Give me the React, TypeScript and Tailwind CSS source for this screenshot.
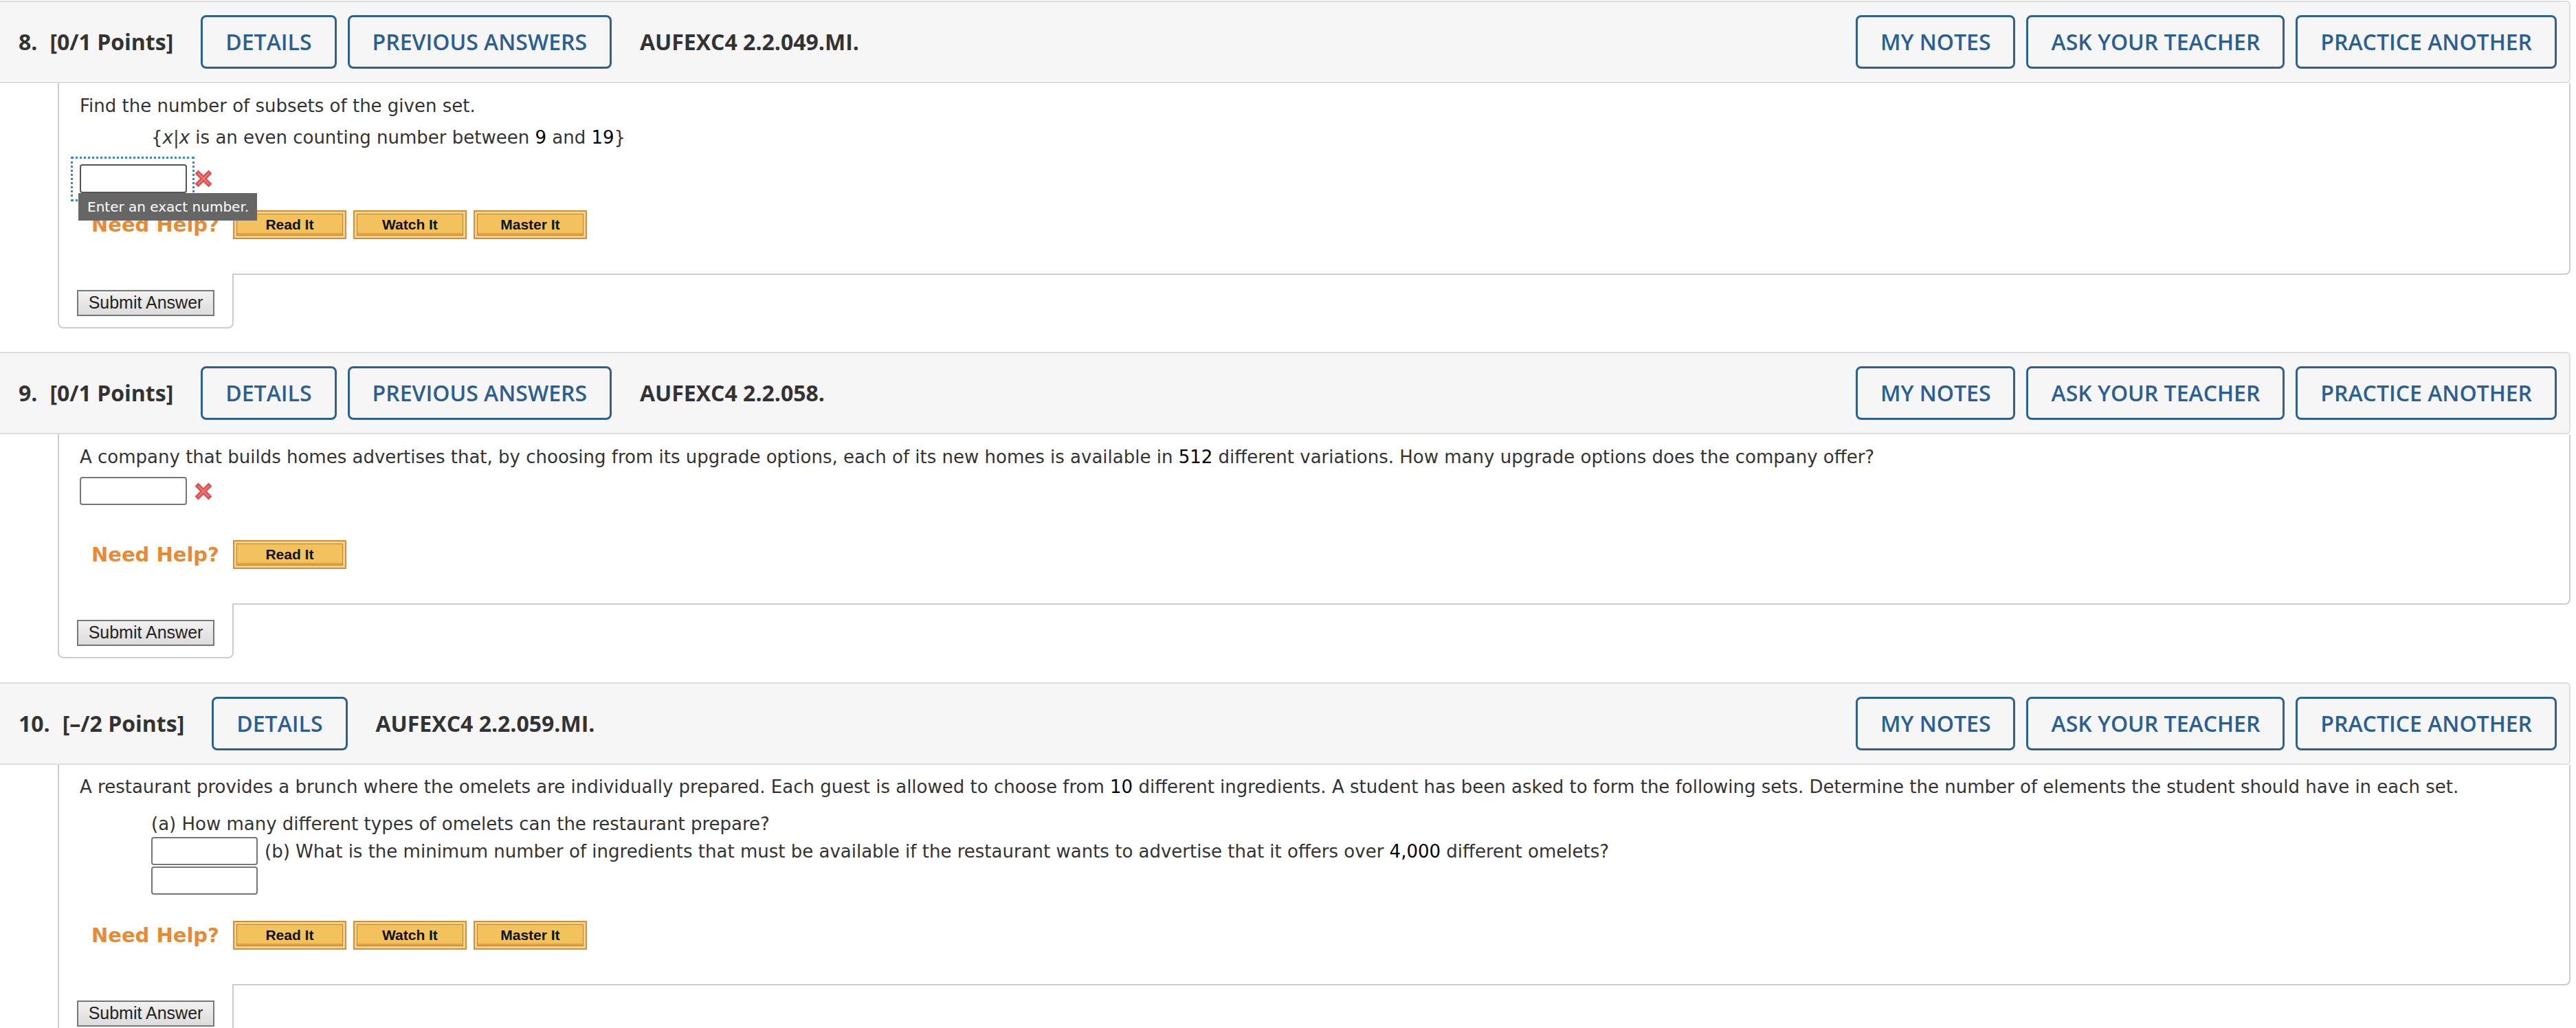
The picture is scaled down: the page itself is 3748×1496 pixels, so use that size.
import type { ReactNode } from 'react';

/* WebAssign-style question list: 3 questions, gray header bars + bordered answer panels */

const body = "font-['DejaVu_Sans','Verdana',sans-serif] text-[26px] leading-[36px] text-[#333]";

function HeadButton({ children }: { children: ReactNode }) {
  return (
    <span className="flex h-[78px] items-center rounded-[8px] border-[3px] border-[#2d6195] px-[33px] text-[32px] font-semibold text-[#2b5f94]">
      {children}
    </span>
  );
}

function Header({ num, points, prev, code }: { num: string; points: string; prev: boolean; code: string }) {
  return (
    <div className="mr-[8px] flex h-[120px] items-center rounded-r-[6px] border-y-2 border-r-2 border-[#dedede] bg-[#f6f6f6] pl-[27px] pr-[18px] font-['Open_Sans',sans-serif] text-[#333]">
      <span className="text-[32px] font-bold">{num}.</span>
      <span className="ml-[18px] text-[32px] font-bold">[{points} Points]</span>
      <div className="ml-[40px] flex gap-[16px]">
        <HeadButton>DETAILS</HeadButton>
        {prev && <HeadButton>PREVIOUS ANSWERS</HeadButton>}
      </div>
      <span className="ml-[41px] text-[32px] font-bold">{code}</span>
      <div className="ml-auto flex gap-[16px]">
        <HeadButton>MY NOTES</HeadButton>
        <HeadButton>ASK YOUR TEACHER</HeadButton>
        <HeadButton>PRACTICE ANOTHER</HeadButton>
      </div>
    </div>
  );
}

function HelpButton({ label }: { label: string }) {
  return (
    <span className="flex h-[42px] w-[165px] border-2 border-[#d98d38] bg-[#f7d28a] p-[3px]">
      <span className="flex flex-1 items-center justify-center border border-[#b98434] bg-[#f3c25c] font-['Liberation_Sans',Arial,sans-serif] text-[21px] font-bold text-[#111] shadow-[inset_0_-3px_0_#e2a443]">
        {label}
      </span>
    </span>
  );
}

function NeedHelp({ buttons }: { buttons: string[] }) {
  return (
    <div className="flex items-center">
      <span className="ml-[17px] mr-[20px] font-['DejaVu_Sans',sans-serif] text-[29px] font-bold text-[#e98a2f]">Need Help?</span>
      <div className="flex gap-[10px]">
        {buttons.map(b => <HelpButton key={b} label={b} />)}
      </div>
    </div>
  );
}

function WrongMark() {
  return (
    <svg width="28" height="28" viewBox="0 0 28 28" className="ml-[10px]">
      <path d="M4 4 L24 24 M24 4 L4 24" stroke="#e04f4f" strokeWidth="7" />
      <path d="M6 6 L22 22 M22 6 L6 22" stroke="#ef7a7a" strokeWidth="2" />
    </svg>
  );
}

function Panel({ children }: { children: ReactNode }) {
  return (
    <div className="ml-[84px] mr-[8px]">
      <div className={`rounded-br-[8px] border-x-2 border-b-2 border-[#cdcdcd] bg-white pb-[50px] pl-[30px] ${body}`}>
        {children}
      </div>
      <div className="relative -mt-[2px] w-[256px] rounded-b-[8px] border-x-2 border-b-2 border-[#cdcdcd] bg-white pb-[16px] pl-[26px] pt-[24px]">
        <span className="flex h-[38px] w-[200px] items-center justify-center border-2 border-[#777] bg-gradient-to-b from-[#f2f2f2] to-[#dcdcdc] font-['Liberation_Sans',Arial,sans-serif] text-[25px] text-[#222]">
          Submit Answer
        </span>
      </div>
    </div>
  );
}

const num = 'text-black';

export default function App() {
  return (
    <div className="min-h-screen w-[3748px] bg-white pt-px">
      {/* 8 */}
      <Header num="8" points="0/1" prev code="AUFEXC4 2.2.049.MI." />
      <Panel>
        <p className="pt-[15px]">Find the number of subsets of the given set.</p>
        <p className="mt-[10px] pl-[104px]">
          {'{'}<i>x</i>|<i>x</i> is an even counting number between <span className={num}>9</span> and <span className={num}>19</span>{'}'}
        </p>
        <div className="relative mt-[21px] flex items-center">
          <span className="absolute -left-[13px] -top-[11px] h-[65px] w-[180px] border-[3px] border-dotted border-[#3b7fdd]" />
          <span className="relative h-[42px] w-[156px] rounded-[4px] border-2 border-[#555] bg-white" />
          <WrongMark />
          <span className="absolute -left-[2px] top-[42px] z-10 flex h-[40px] w-[260px] items-center bg-[#666] pl-[13px] text-[20px] leading-none text-white">
            Enter an exact number.
          </span>
        </div>
        <div className="mt-[25px]">
          <NeedHelp buttons={['Read It', 'Watch It', 'Master It']} />
        </div>
      </Panel>

      {/* 9 */}
      <div className="mt-[34px]">
        <Header num="9" points="0/1" prev code="AUFEXC4 2.2.058." />
      </div>
      <Panel>
        <p className="pt-[15px]">
          A company that builds homes advertises that, by choosing from its upgrade options, each of its new homes is available in <span className={num}>512</span> different variations. How many upgrade options does the company offer?
        </p>
        <div className="mt-[11px] flex items-center">
          <span className="h-[41px] w-[156px] rounded-[4px] border-2 border-[#777] bg-white" />
          <WrongMark />
        </div>
        <div className="mt-[51px]">
          <NeedHelp buttons={['Read It']} />
        </div>
      </Panel>

      {/* 10 */}
      <div className="mt-[35px]">
        <Header num="10" points="–/2" prev={false} code="AUFEXC4 2.2.059.MI." />
      </div>
      <Panel>
        <p className="pt-[14px]">
          A restaurant provides a brunch where the omelets are individually prepared. Each guest is allowed to choose from <span className={num}>10</span> different ingredients. A student has been asked to form the following sets. Determine the number of elements the student should have in each set.
        </p>
        <div className="mt-[18px] pl-[104px]">
          <p>(a) How many different types of omelets can the restaurant prepare?</p>
          <div className="mt-px flex items-center">
            <span className="h-[41px] w-[155px] rounded-[4px] border-2 border-[#777] bg-white" />
            <span className="ml-[10px]">
              (b) What is the minimum number of ingredients that must be available if the restaurant wants to advertise that it offers over <span className={num}>4,000</span> different omelets?
            </span>
          </div>
          <span className="mt-[2px] block h-[41px] w-[155px] rounded-[4px] border-2 border-[#777] bg-white" />
        </div>
        <div className="mt-[38px]">
          <NeedHelp buttons={['Read It', 'Watch It', 'Master It']} />
        </div>
      </Panel>
    </div>
  );
}
